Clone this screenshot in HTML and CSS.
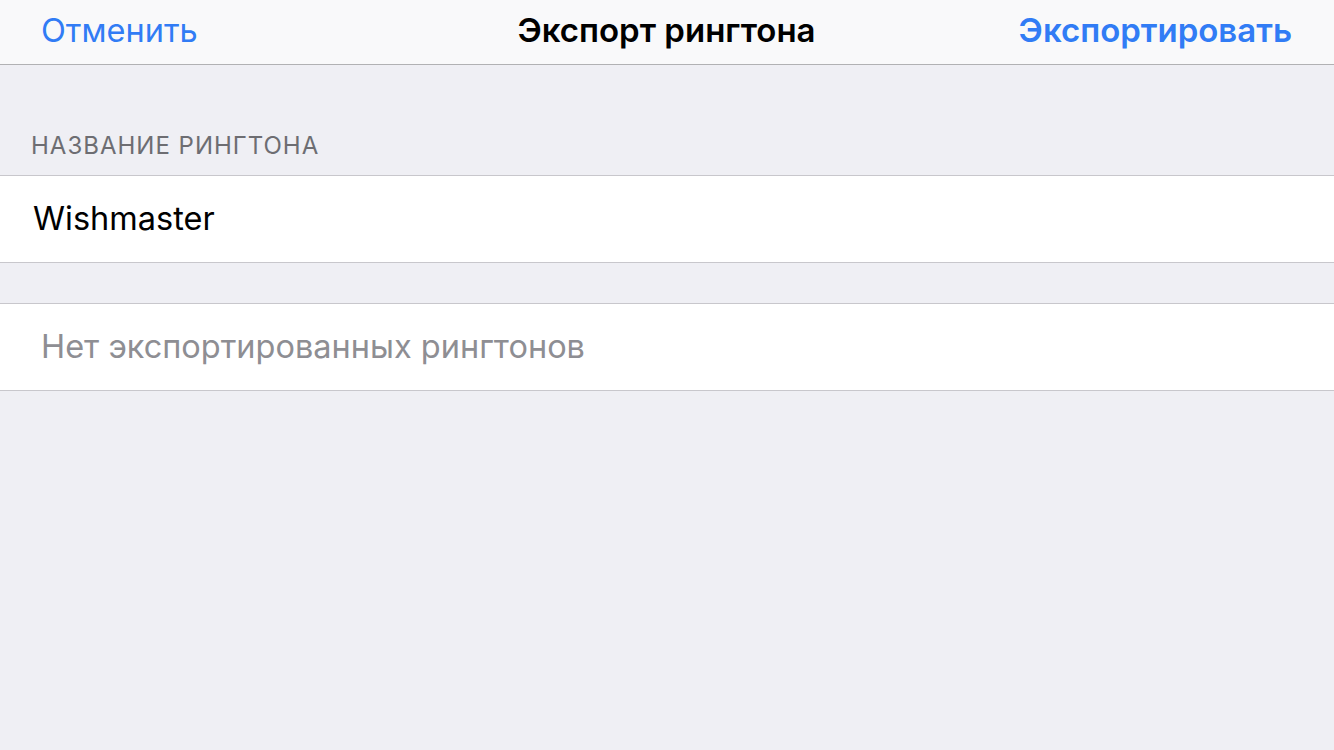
FILE: index.html
```html
<!DOCTYPE html>
<html lang="ru">
<head>
  <meta charset="UTF-8">
  <meta name="viewport" content="width=device-width, initial-scale=1.0">
  <title>Экспорт рингтона</title>
  <link rel="stylesheet" href="styles.css">
</head>
<body>
  <!-- Navigation bar -->
  <header class="navbar">
    <a class="nav-btn nav-left" href="#">Отменить</a>
    <h1 class="nav-title">Экспорт рингтона</h1>
    <a class="nav-btn nav-right" href="#">Экспортировать</a>
  </header>

  <!-- Ringtone name -->
  <div class="section-header">НАЗВАНИЕ РИНГТОНА</div>
  <div class="group">
    <div class="cell cell-name">Wishmaster</div>
  </div>

  <!-- Exported list -->
  <div class="group group-spaced">
    <div class="cell cell-empty">Нет экспортированных рингтонов</div>
  </div>
</body>
</html>
```

FILE: styles.css
```css
body {
  margin: 0;
  background: #efeff4;
  font-family: Inter, "Noto Sans", sans-serif;
  height: 750px;
  overflow: hidden;
}
.navbar {
  display: grid;
  grid-template-columns: 1fr auto 1fr;
  align-items: center;
  height: 60px;
  padding: 0 42px 4px 41px;
  background: #f9f9fa;
  border-bottom: 1px solid #b1b1b3;
}
.nav-btn {
  color: #317cf5;
  text-decoration: none;
  font-size: 32.5px;
}
.nav-left {
  justify-self: start;
}
.nav-right {
  justify-self: end;
  font-size: 33px;
  font-weight: 600;
}
.nav-title {
  margin: 0;
  font-size: 33px;
  font-weight: 600;
  color: #000;
}
.section-header {
  padding: 66px 31px 14px;
  font-size: 24px;
  letter-spacing: 1px;
  color: #6d6d72;
  line-height: 30px;
}
.group {
  background: #fff;
  border-top: 1px solid #c8c7cc;
  border-bottom: 1px solid #c8c7cc;
}
.group-spaced {
  margin-top: 40px;
}
.cell {
  height: 84px;
  padding-bottom: 2px;
  display: flex;
  align-items: center;
  font-size: 32.5px;
}
.cell-name {
  padding-left: 33px;
  color: #000;
}
.cell-empty {
  padding-left: 41px;
  color: #8e8e93;
}
```
